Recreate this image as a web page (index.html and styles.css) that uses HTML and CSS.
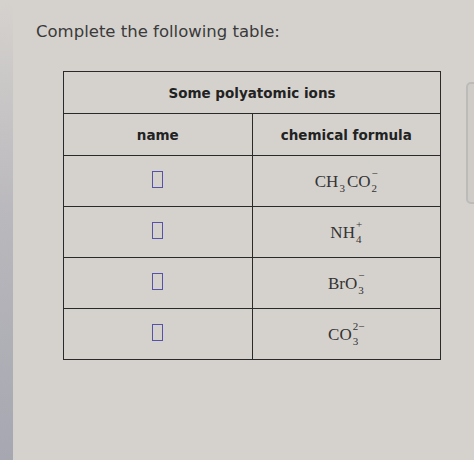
FILE: index.html
```html
<!DOCTYPE html>
<html>
<head>
<meta charset="utf-8">
<link rel="stylesheet" href="styles.css">
</head>
<body>
<div class="page">
  <div class="edge-left"></div>
  <div class="edge-right"></div>
  <p class="prompt">Complete the following table:</p>
  <table class="ions">
    <tr><th colspan="2" class="title">Some polyatomic ions</th></tr>
    <tr><th class="hd">name</th><th class="hd">chemical formula</th></tr>
    <tr><td><span class="box"></span></td><td class="f">CH<span class="sb">3</span>CO<span class="ion"><span>&#8722;</span><span>2</span></span></td></tr>
    <tr><td><span class="box"></span></td><td class="f">NH<span class="ion"><span>+</span><span>4</span></span></td></tr>
    <tr><td><span class="box"></span></td><td class="f">BrO<span class="ion"><span>&#8722;</span><span>3</span></span></td></tr>
    <tr><td><span class="box"></span></td><td class="f">CO<span class="ion"><span>2&#8722;</span><span>3</span></span></td></tr>
  </table>
</div>
</body>
</html>
```
FILE: styles.css
```css
html, body { margin: 0; padding: 0; }
body {
  width: 474px; height: 460px; overflow: hidden;
  background: #d5d2ce;
  font-family: "DejaVu Sans", Verdana, sans-serif;
}
.page { position: relative; width: 474px; height: 460px; padding: 20px 0 0 0; box-sizing: border-box; }
.edge-left {
  position: absolute; left: 0; top: 0; width: 13px; height: 460px;
  background: linear-gradient(to bottom, rgba(160,160,172,0) 0%, rgba(160,160,172,0.5) 45%, #a6a7b1 100%);
}
.edge-right {
  position: absolute; left: 466px; top: 82px; width: 20px; height: 118px;
  border: 2px solid #bdbbb9; border-radius: 5px; background: #cfccc8;
}
.prompt {
  margin: 0 0 0 36px;
  font-size: 16.5px; color: #3a3a3a; line-height: 24px;
}
.ions {
  margin: 27px 0 0 63px;
  border-collapse: collapse;
  width: 378px;
  color: #222;
}
.ions th, .ions td { border: 1.5px solid #2a2a2a; text-align: center; padding: 0; }
.title { height: 41px; font-size: 13.5px; font-weight: bold; }
.hd { height: 41px; width: 50%; font-size: 13.5px; font-weight: bold; }
.ions td { height: 50px; }
.box {
  display: inline-block; width: 9px; height: 15px;
  border: 1.5px solid #5552a8; vertical-align: middle; position: relative; top: -3px;
}
.f { font-family: "Liberation Serif", "Times New Roman", serif; font-size: 17px; color: #333; }
.sb { font-size: 11px; position: relative; top: 5px; margin: 0 2px 0 1px; }
.ion {
  display: inline-flex; flex-direction: column; align-items: flex-start;
  vertical-align: 10px; line-height: 15px; font-size: 11px; margin-left: 1px;
}
```
